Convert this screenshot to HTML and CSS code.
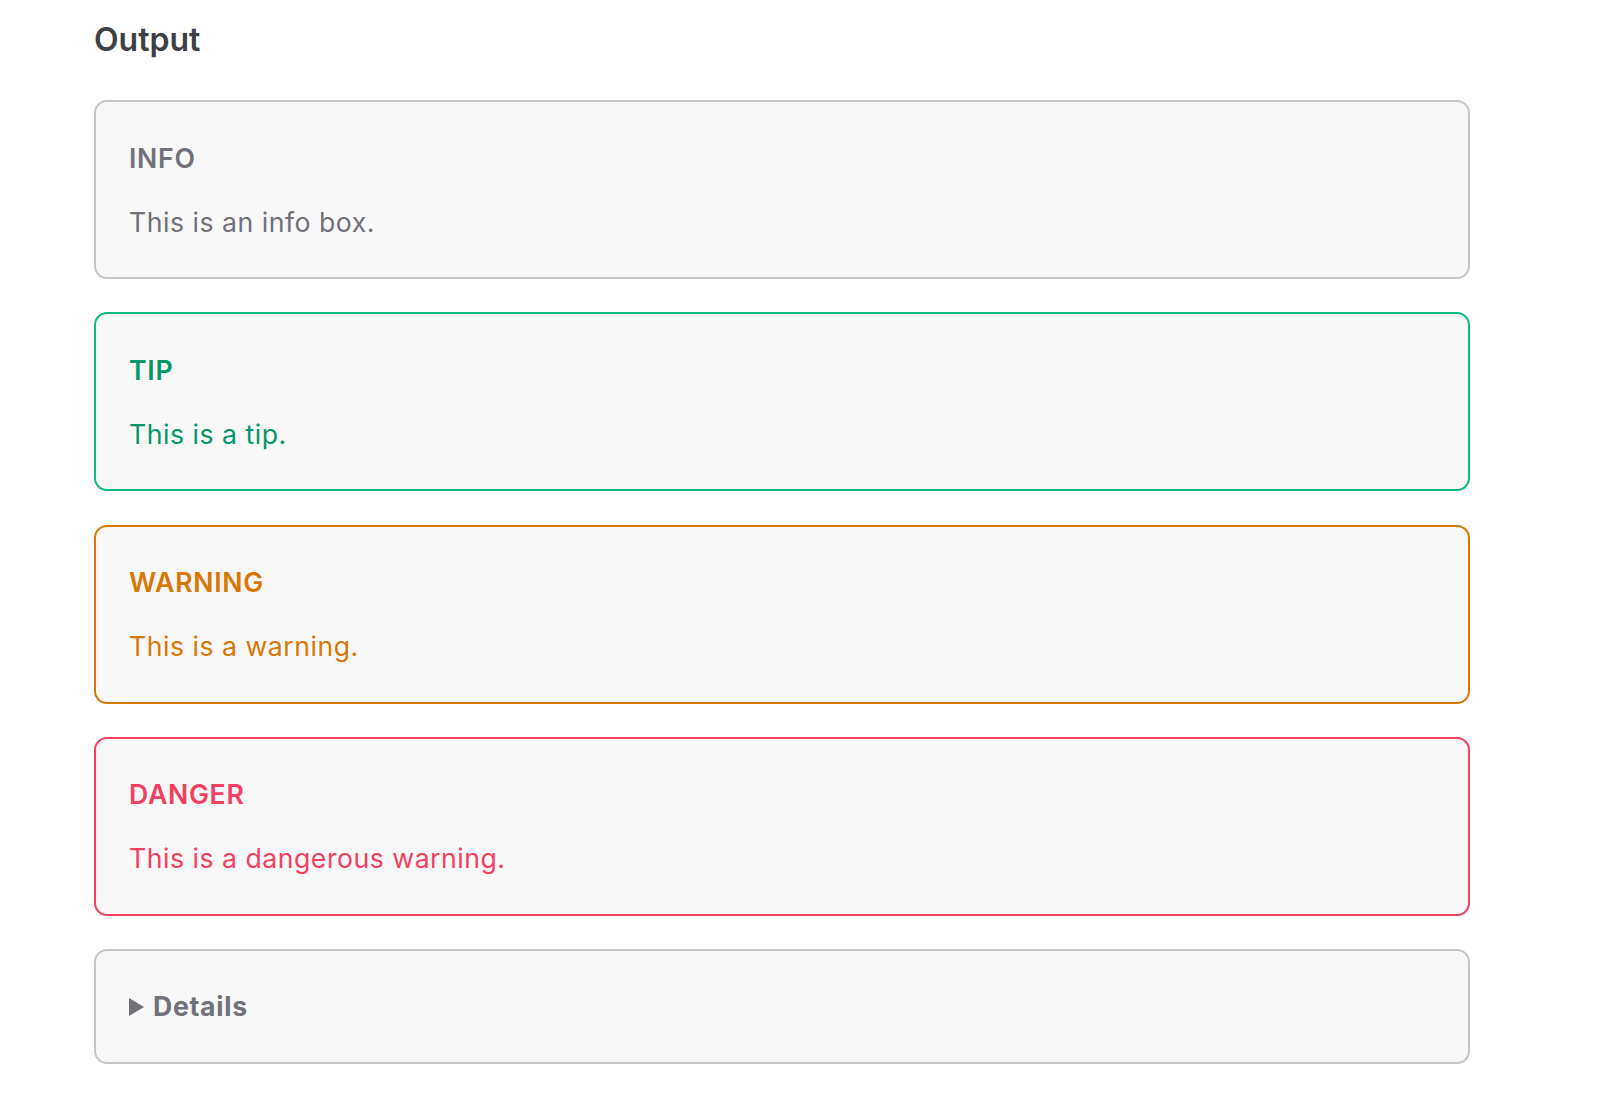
FILE: index.html
```html
<!DOCTYPE html>
<html lang="en">
<head>
<meta charset="utf-8">
<title>Output</title>
<link rel="stylesheet" href="styles.css">
</head>
<body>
<main class="page">
  <h2 class="title">Output</h2>
  <section class="callouts">
    <div class="callout callout-info">
      <p class="callout-label">INFO</p>
      <p class="callout-body">This is an info box.</p>
    </div>
    <div class="callout callout-tip">
      <p class="callout-label">TIP</p>
      <p class="callout-body">This is a tip.</p>
    </div>
    <div class="callout callout-warning">
      <p class="callout-label">WARNING</p>
      <p class="callout-body">This is a warning.</p>
    </div>
    <div class="callout callout-danger">
      <p class="callout-label">DANGER</p>
      <p class="callout-body">This is a dangerous warning.</p>
    </div>
    <details class="callout callout-details">
      <summary class="details-summary"><span class="details-caret"></span>Details</summary>
    </details>
  </section>
</main>
</body>
</html>
```
FILE: styles.css
```css
* {
  box-sizing: border-box;
}

html, body {
  margin: 0;
  padding: 0;
  background: #ffffff;
}

body {
  font-family: Inter, "Noto Sans", sans-serif;
  -webkit-font-smoothing: antialiased;
}

.page {
  padding: 20px 0 0 94px;
  width: 1470px;
}

.title {
  margin: 0;
  font-size: 32px;
  line-height: 40px;
  font-weight: 600;
  color: #3f3f46;
}

.callouts {
  margin-top: 40px;
  display: flex;
  flex-direction: column;
  gap: 33.3px;
}

.callout {
  background: #f8f8f8;
  border: 2px solid #c6c6c6;
  border-radius: 13px;
  padding: 35.5px 33px 35.5px 33px;
  color: #71717a;
}

.callout-label {
  margin: 0 0 24px 0;
  font-size: 26.67px;
  line-height: 40px;
  font-weight: 600;
  letter-spacing: 0.7px;
}

.callout-body {
  margin: 0;
  font-size: 26.67px;
  line-height: 40px;
  font-weight: 400;
  letter-spacing: 0.5px;
}

.callout-tip {
  border-color: #10b981;
  color: #059669;
}

.callout-warning {
  border-color: #d97706;
  color: #d97706;
}

.callout-danger {
  border-color: #f43f5e;
  color: #f43f5e;
}

.callout-details {
  padding-top: 35px;
  padding-bottom: 36px;
}

.details-summary {
  list-style: none;
  display: flex;
  align-items: center;
  gap: 9px;
  font-size: 26.67px;
  line-height: 40px;
  font-weight: 700;
  letter-spacing: 0.7px;
  color: #71717a;
  cursor: pointer;
}

.details-summary::-webkit-details-marker {
  display: none;
}

.details-caret {
  width: 0;
  height: 0;
  border-top: 9px solid transparent;
  border-bottom: 9px solid transparent;
  border-left: 15px solid #71717a;
  margin-top: 2px;
}
```
